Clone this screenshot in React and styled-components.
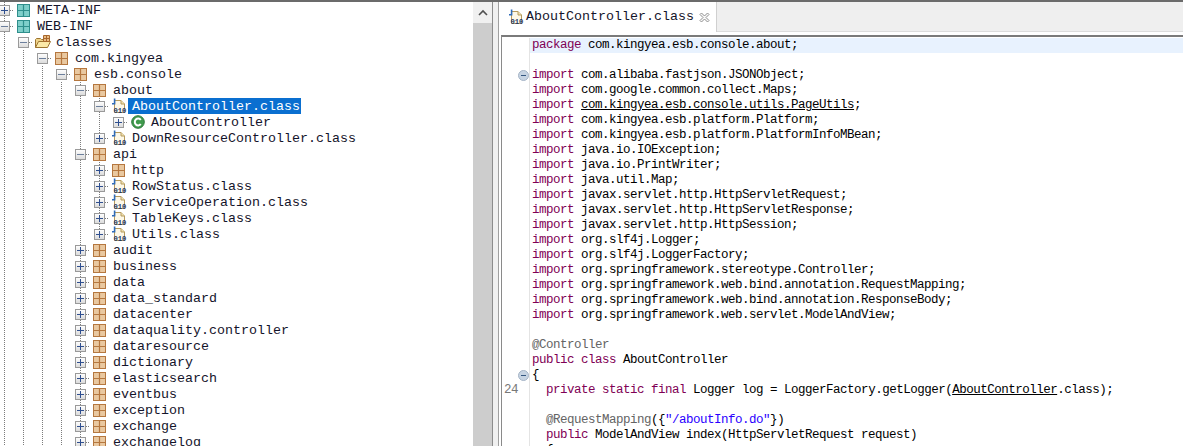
import styled, { createGlobalStyle } from "styled-components";

const Global = createGlobalStyle`
  html, body {
    margin: 0;
    padding: 0;
    background: #fff;
    overflow: hidden;
  }
`;

const Page = styled.div`
  display: flex;
  width: 1183px;
  height: 446px;
  overflow: hidden;
  border-top: 2px solid #6b6b6b;
  box-sizing: border-box;
  background: #fff;
`;

const TreePane = styled.div`
  flex: none;
  width: 473px;
  overflow: hidden;
`;

const TreeList = styled.div`
  margin-left: -5px;
`;

const Row = styled.div`
  display: flex;
  height: 16px;
`;

const dots = "repeating-linear-gradient(to bottom, #7c7c7c 0 1px, transparent 1px 2px)";
const dotsH = "repeating-linear-gradient(to right, #7c7c7c 0 1px, transparent 1px 2px)";

const Guide = styled.div`
  flex: none;
  width: 19px;
  height: 16px;
  background: ${dots} 9px 0 / 1px 100% no-repeat;
`;

const ExpanderCell = styled.div`
  flex: none;
  width: 19px;
  height: 16px;
  display: flex;
  align-items: center;
  justify-content: center;
  background:
    ${dotsH} 9px 8px / 10px 1px no-repeat,
    ${(p) => (p.$solo ? "none" : `${dots} 9px 0 / 1px ${p.$last ? "8px" : "100%"} no-repeat`)};
`;

const Expander = styled.div`
  box-sizing: border-box;
  width: 11px;
  height: 11px;
  border: 1px solid #9a9a9a;
  background: linear-gradient(#fdfdfd, #dcdcdc);
  display: flex;
  align-items: center;
  justify-content: center;
  position: relative;
`;

const Dash = styled.span`
  display: block;
  width: 7px;
  height: 1px;
  background: ${(p) => (p.$open ? "#6c7f9c" : "#2f4f8f")};
`;

const Stem = styled.span`
  position: absolute;
  left: 4px;
  top: 1px;
  width: 1px;
  height: 7px;
  background: #2f4f8f;
`;

const IconCell = styled.div`
  flex: none;
  width: 19px;
  height: 16px;
  display: flex;
  align-items: center;
  justify-content: center;
`;

const Label = styled.div`
  height: 16px;
  margin-left: ${(p) => (p.$selected ? "0" : "4px")};
  padding: ${(p) => (p.$selected ? "0 1px 0 4px" : "0")};
  font: 13.33px/18px "Liberation Mono", "DejaVu Sans Mono", monospace;
  white-space: pre;
  overflow: visible;
  color: ${(p) => (p.$selected ? "#fff" : "#14142a")};
  background: ${(p) => (p.$selected ? "#0a6fd0" : "transparent")};
`;

const ScrollBar = styled.div`
  flex: none;
  width: 19px;
  display: flex;
  flex-direction: column;
  background: #cdcdcd;
`;

const ScrollButton = styled.div`
  height: 21px;
  background: #f0f0f0;
  display: flex;
  align-items: center;
  justify-content: center;
`;

const Sash = styled.div`
  flex: none;
  width: 6px;
  border-left: 1px solid #8c8c8c;
  box-sizing: border-box;
  background: #f0f0f0;
`;

const EditorPane = styled.div`
  flex: 1;
  min-width: 0;
  display: flex;
  flex-direction: column;
  border-left: 1px solid #a0a0a0;
  background: #fff;
`;

const TabBar = styled.div`
  flex: none;
  height: 29px;
  display: flex;
  background: #efefef;
  border-bottom: 1px solid #dcdcdc;
`;

const Tab = styled.div`
  width: 218px;
  box-sizing: border-box;
  height: 30px;
  padding-left: 9px;
  display: flex;
  align-items: center;
  gap: 2px;
  background: #fff;
  border-right: 1px solid #d0d0d0;
  font: 13.33px/16px "Liberation Mono", monospace;
  color: #14142a;
`;

const TabClose = styled.span`
  display: flex;
  margin-left: 3px;
`;

const Editor = styled.div`
  flex: 1;
  margin: 3px 0 0 2px;
  border-top: 2px solid #7a7a7a;
  border-left: 1px solid #8a8a8a;
  padding-top: 1px;
  overflow: hidden;
`;

const CodeLine = styled.div`
  display: flex;
  height: 15px;
`;

const Gutter = styled.div`
  flex: none;
  width: 25px;
  height: 15px;
  border-right: 1px solid #e4e4e4;
  padding-left: 2px;
  display: flex;
  align-items: center;
  justify-content: space-between;
  font: 12.5px/15px "Liberation Mono", monospace;
  letter-spacing: -0.5px;
  color: #787878;
`;

const Code = styled.div`
  flex: 1;
  padding-left: 2px;
  font: 12.5px/15px "Liberation Mono", "DejaVu Sans Mono", monospace;
  letter-spacing: -0.5px;
  white-space: pre;
  color: #000;
  background: ${(p) => (p.$current ? "#e8f2fe" : "transparent")};
`;

const Kw = styled.span`
  color: #7f0055;
`;

const Ann = styled.span`
  color: #646464;
`;

const Str = styled.span`
  color: #2a00ff;
`;

const Link = styled.span`
  text-decoration: underline;
`;

const PackageIcon = ({ color = "#b5773f", fill = "#e9c8a0" }) => (
  <svg width="13" height="13" viewBox="0 0 13 13">
    <rect x="0.5" y="0.5" width="12" height="12" fill={fill} stroke={color} />
    <path d="M6.5 1v11M1 6.5h11" stroke={color} strokeWidth="1.2" />
  </svg>
);

const FolderIcon = () => (
  <svg width="16" height="14" viewBox="0 0 16 14">
    <path d="M0.5 12.5v-8l1-1h4l1 1h5v2" fill="#f0d48a" stroke="#9c7430" />
    <path d="M0.5 12.5l3-6h12l-3 6z" fill="#fbe9a8" stroke="#9c7430" />
    <path d="M8.5 0.5h6v6h-6z" fill="#e8bb84" stroke="#a8682c" />
    <path d="M11.5 0.5v6M8.5 3.5h6" stroke="#a8682c" />
  </svg>
);

const ClassIcon = () => (
  <svg width="16" height="16" viewBox="0 0 16 16">
    <path d="M3.5 2.5h6.5l3.5 3.5v8.5h-10z" fill="#fdf8e8" stroke="#b59a5c" />
    <path d="M10 2.5v3.5h3.5" fill="#f2e2b0" stroke="#b59a5c" />
    <path d="M3.6 0.5v5.2H1" fill="none" stroke="#2f6bb8" strokeWidth="1.6" />
    <text x="2.4" y="14.5" fontFamily="Liberation Mono" fontSize="7" fontWeight="700" textLength="13" lengthAdjust="spacingAndGlyphs" fill="#1f3864">010</text>
  </svg>
);

const ClassBadge = () => (
  <svg width="14" height="14" viewBox="0 0 14 14">
    <circle cx="7" cy="7" r="6.3" fill="#3f9a4c" stroke="#2f7a3c" />
    <path d="M9.8 4.8A3.4 3.4 0 1 0 9.8 9.2" fill="none" stroke="#fff" strokeWidth="2" />
  </svg>
);

const CloseIcon = () => (
  <svg width="11" height="11" viewBox="0 0 11 11">
    <path d="M1 2.5L2.5 1 5.5 4 8.5 1 10 2.5 7 5.5 10 8.5 8.5 10 5.5 7 2.5 10 1 8.5 4 5.5z" fill="#f8f8f8" stroke="#8f8f8f" />
  </svg>
);

const FoldIcon = () => (
  <svg width="11" height="11" viewBox="0 0 11 11">
    <circle cx="5.5" cy="5.5" r="5" fill="#c7d4e2" stroke="#a5b4c6" />
    <path d="M3 5.5h5" stroke="#33567f" />
  </svg>
);

const icons = {
  source: <PackageIcon color="#2f8f8c" fill="#7fcfca" />,
  folder: <FolderIcon />,
  pkg: <PackageIcon />,
  file: <ClassIcon />,
  type: <ClassBadge />,
};

const tree = [
  { label: "META-INF", depth: 0, icon: "source" },
  { label: "WEB-INF", depth: 0, icon: "source", open: true },
  { label: "classes", depth: 1, icon: "folder", open: true, solo: true },
  { label: "com.kingyea", depth: 2, icon: "pkg", open: true, solo: true },
  { label: "esb.console", depth: 3, icon: "pkg", open: true, solo: true },
  { label: "about", depth: 4, icon: "pkg", open: true },
  { label: "AboutController.class", depth: 5, icon: "file", open: true, selected: true },
  { label: "AboutController", depth: 6, icon: "type", solo: true },
  { label: "DownResourceController.class", depth: 5, icon: "file", last: true },
  { label: "api", depth: 4, icon: "pkg", open: true },
  { label: "http", depth: 5, icon: "pkg" },
  { label: "RowStatus.class", depth: 5, icon: "file" },
  { label: "ServiceOperation.class", depth: 5, icon: "file" },
  { label: "TableKeys.class", depth: 5, icon: "file" },
  { label: "Utils.class", depth: 5, icon: "file", last: true },
  ...[
    "audit", "business", "data", "data_standard", "datacenter", "dataquality.controller",
    "dataresource", "dictionary", "elasticsearch", "eventbus", "exception", "exchange", "exchangelog",
  ].map((label) => ({ label, depth: 4, icon: "pkg" })),
];

const imports = [
  "com.alibaba.fastjson.JSONObject",
  "com.google.common.collect.Maps",
  "com.kingyea.esb.console.utils.PageUtils",
  "com.kingyea.esb.platform.Platform",
  "com.kingyea.esb.platform.PlatformInfoMBean",
  "java.io.IOException",
  "java.io.PrintWriter",
  "java.util.Map",
  "javax.servlet.http.HttpServletRequest",
  "javax.servlet.http.HttpServletResponse",
  "javax.servlet.http.HttpSession",
  "org.slf4j.Logger",
  "org.slf4j.LoggerFactory",
  "org.springframework.stereotype.Controller",
  "org.springframework.web.bind.annotation.RequestMapping",
  "org.springframework.web.bind.annotation.ResponseBody",
  "org.springframework.web.servlet.ModelAndView",
];

const TreeRow = ({ row }) => (
  <Row>
    {Array.from({ length: row.depth }, (_, i) => <Guide key={i} />)}
    <ExpanderCell $solo={row.solo} $last={row.last}>
      <Expander>
        <Dash $open={row.open} />
        {!row.open && <Stem />}
      </Expander>
    </ExpanderCell>
    <IconCell>{icons[row.icon]}</IconCell>
    <Label $selected={row.selected}>{row.label}</Label>
  </Row>
);

const Line = ({ number, fold, current, children }) => (
  <CodeLine>
    <Gutter>
      <span>{number}</span>
      {fold && <FoldIcon />}
    </Gutter>
    <Code $current={current}>{children}</Code>
  </CodeLine>
);

const App = () => {
  return (
    <>
      <Global />
      <Page>
        <TreePane>
          <TreeList>
            {tree.map((row) => <TreeRow key={row.label + row.depth} row={row} />)}
          </TreeList>
        </TreePane>
        <ScrollBar>
          <ScrollButton>
            <svg width="10" height="7" viewBox="0 0 10 7">
              <path d="M1 6l4-4 4 4" fill="none" stroke="#505050" strokeWidth="1.6" />
            </svg>
          </ScrollButton>
        </ScrollBar>
        <Sash />
        <EditorPane>
          <TabBar>
            <Tab>
              <ClassIcon />
              AboutController.class
              <TabClose><CloseIcon /></TabClose>
            </Tab>
          </TabBar>
          <Editor>
            <Line current><Kw>package</Kw> com.kingyea.esb.console.about;</Line>
            <Line>{" "}</Line>
            {imports.map((name, i) => (
              <Line key={name} fold={i === 0}>
                <Kw>import</Kw>{" "}
                {name.endsWith("PageUtils") ? <Link>{name}</Link> : name};
              </Line>
            ))}
            <Line>{" "}</Line>
            <Line><Ann>@Controller</Ann></Line>
            <Line><Kw>public</Kw> <Kw>class</Kw> AboutController</Line>
            <Line fold>{"{"}</Line>
            <Line number="24">
              {"  "}<Kw>private</Kw> <Kw>static</Kw> <Kw>final</Kw> Logger log = LoggerFactory.getLogger(<Link>AboutController</Link>.class);
            </Line>
            <Line>{" "}</Line>
            <Line>{"  "}<Ann>@RequestMapping</Ann>({"{"}<Str>"/aboutInfo.do"</Str>{"}"})</Line>
            <Line>{"  "}<Kw>public</Kw> ModelAndView index(HttpServletRequest request)</Line>
            <Line>{"  {"}</Line>
          </Editor>
        </EditorPane>
      </Page>
    </>
  );
};

export default App;
